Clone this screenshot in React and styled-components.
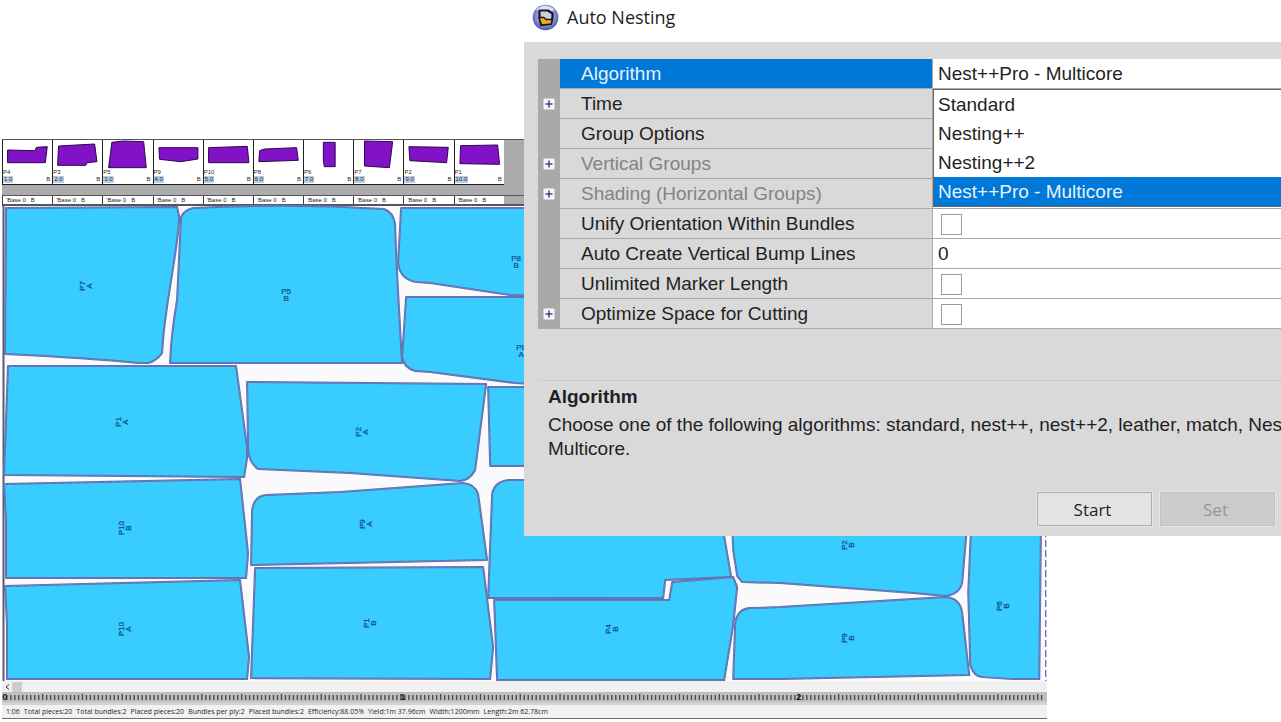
import React from 'react';
import styled, { createGlobalStyle } from 'styled-components';

const GlobalStyle = createGlobalStyle`
  * {
    box-sizing: border-box;
  }

  body {
    margin: 0;
    background: #ffffff;
    color: #1f1f24;
    font-family: 'Liberation Sans', Arial, sans-serif;
  }
`;

const Desktop = styled.main`
  position: relative;
  min-height: 100vh;
  overflow: hidden;
`;

/* marker window */

const MarkerWindow = styled.section`
  position: absolute;
  top: 139px;
  left: 2px;
  width: 81.6%;
  background: #ababab;
  border-bottom: 1px solid #6f6f6f;
`;

const Strip = styled.div`
  display: grid;
  grid-template-columns: repeat(10, 4.8%);
  border-top: 1px solid #55555c;
  margin-bottom: ${(props) => props.$gap || 0}px;
`;

const Thumb = styled.div`
  display: flex;
  flex-direction: column;
  height: 45px;
  background: #ffffff;
  border-left: 1px solid #202020;
  border-bottom: 1px solid #202020;
  font-size: 6px;
  line-height: 7px;
`;

const ThumbShape = styled.svg`
  display: block;
  width: 100%;
  height: 29px;
`;

const ThumbFoot = styled.div`
  display: flex;
  justify-content: space-between;
  padding-right: 2px;
`;

const ThumbNumber = styled.span`
  padding: 0 1px;
  background: #b9cfe4;
`;

const SizeCell = styled.div`
  height: 8px;
  padding-left: 3px;
  background: #ffffff;
  border-left: 1px solid #404040;
  font-size: 6px;
  line-height: 8px;
  white-space: pre;
`;

const MarkerCanvas = styled.svg`
  display: block;
  width: 100%;
  background: #fafafc;
  font-family: 'Liberation Sans', Arial, sans-serif;
`;

const ScrollBar = styled.div`
  display: flex;
  align-items: center;
  height: 11px;
  background: #f0f0f0;
`;

const ScrollArrow = styled.button`
  display: flex;
  align-items: center;
  justify-content: center;
  width: 10px;
  height: 11px;
  padding: 0;
  border: none;
  background: none;
`;

const ScrollThumb = styled.div`
  width: 10px;
  height: 10px;
  background: #cdcdcd;
`;

const Ruler = styled.svg`
  display: block;
  width: 100%;
  font-family: 'Liberation Sans', Arial, sans-serif;
`;

const StatusBar = styled.footer`
  display: flex;
  gap: 4px;
  height: 13px;
  padding-left: 4px;
  background: #f1f1f1;
  color: #26262c;
  font-family: 'Open Sans', sans-serif;
  font-size: 7px;
  line-height: 14px;
  white-space: nowrap;
`;

/* dialog */

const Dialog = styled.section`
  position: absolute;
  top: 0;
  left: 524px;
  right: 0;
  background: #d9d9d9;
`;

const TitleBar = styled.header`
  display: flex;
  align-items: center;
  gap: 8px;
  height: 42px;
  padding: 0 8px 8px;
  background: #ffffff;
`;

const Title = styled.h1`
  margin: 0;
  font-family: 'Open Sans', sans-serif;
  font-size: 18px;
  font-weight: 400;
  line-height: 24px;
`;

const PropertyGrid = styled.div`
  margin: 17px 0 0 14px;
  font-size: 19px;
`;

const Row = styled.div`
  display: grid;
  grid-template-columns: 22px 372px 1fr;
  height: 30px;
`;

const Gutter = styled.div`
  display: flex;
  align-items: center;
  justify-content: center;
  background: #a9a9a9;
`;

const Expand = styled.button`
  display: flex;
  align-items: center;
  justify-content: center;
  width: 12px;
  height: 12px;
  padding: 0;
  border: 1px solid #d0d0d8;
  border-radius: 2px;
  background: #f6f6fa;
`;

const Name = styled.label`
  padding-left: 21px;
  border-bottom: 1px solid #a9a9a9;
  background: ${(props) => (props.$selected ? '#0078d7' : 'transparent')};
  color: ${(props) => {
    if (props.$selected) return '#e4f2ff';
    return props.$disabled ? '#838383' : 'inherit';
  }};
  line-height: 29px;
`;

const Value = styled.div`
  position: relative;
  display: flex;
  align-items: center;
  border-left: 1px solid #a9a9a9;
  border-bottom: 1px solid #a9a9a9;
  background: #ffffff;
`;

const Select = styled.select`
  width: 100%;
  height: 28px;
  padding: 0 0 0 5px;
  border: none;
  background: none;
  color: inherit;
  font: inherit;
  appearance: none;
`;

const TextInput = styled.input`
  width: 100%;
  height: 28px;
  padding: 0 0 0 5px;
  border: none;
  background: none;
  color: inherit;
  font: inherit;
`;

const CheckBox = styled.input`
  width: 21px;
  height: 21px;
  margin: 2px 0 0 8px;
  border: 1px solid #9c9c9c;
  background: #ffffff;
  appearance: none;
`;

const Options = styled.ul`
  position: absolute;
  z-index: 1;
  top: 30px;
  left: 0;
  right: 0;
  margin: 0;
  padding: 0;
  border: 1px solid #66666a;
  border-right: none;
  background: #ffffff;
  list-style: none;
`;

const Option = styled.li`
  padding-left: 4px;
  background: ${(props) => (props.$selected ? '#0078d7' : 'transparent')};
  color: ${(props) => (props.$selected ? '#e4f2ff' : 'inherit')};
  line-height: 29px;
`;

const Description = styled.div`
  height: 96px;
  margin: 51px 0 0 14px;
  padding: 4px 0 0 10px;
  border-top: 1px solid #cccccc;
  overflow: hidden;
  font-size: 19px;
  line-height: 24px;
  white-space: nowrap;
`;

const DescriptionTitle = styled.h2`
  margin: 0 0 4px;
  font-size: 19px;
  line-height: 24px;
`;

const DescriptionText = styled.p`
  margin: 0;
`;

const Actions = styled.div`
  display: flex;
  justify-content: flex-end;
  gap: 8px;
  margin-top: 16px;
  padding: 0 6px 10px;
`;

const Button = styled.button`
  width: 115px;
  height: 34px;
  padding: 0 4px 0 0;
  border: 1px solid #adadad;
  outline: 1px solid #e6e6e6;
  background: #e3e3e3;
  color: #1f1f24;
  font-family: 'Open Sans', sans-serif;
  font-size: 17px;

  &:disabled {
    border-color: #c2c2c2;
    background: #cccccc;
    color: #969696;
  }
`;

const thumbs = [
  { name: 'P4', points: '14,30 97,32 102,22 135,20 129,68 14,68' },
  { name: 'P3', points: '17,18 127,12 134,65 104,68 100,76 14,76' },
  { name: 'P5', points: '27,7 62,3 124,5 132,83 17,83' },
  { name: 'P9', points: '15,23 134,23 134,57 82,65 17,58' },
  { name: 'P10', points: '14,23 132,19 137,68 14,68' },
  { name: 'P8', points: '15,65 17,32 32,27 130,23 135,61' },
  { name: 'P6', points: '59,7 95,7 95,80 62,80 59,60' },
  { name: 'P7', points: '32,3 118,5 108,83 32,78' },
  { name: 'P2', points: '15,20 135,22 130,68 18,62' },
  { name: 'P1', points: '17,17 130,15 136,73 15,71' },
];

const pieces = [
  'M6 208 L177 207 L179 216 C180 238 166 300 163 340 L162 353 Q156 361 148 363 L138 363 Q90 358 5 354 Z',
  'M181 217 Q184 210 193 208 Q290 203 384 209 Q393 212 395 224 Q396 262 402 363 L170 363 Q171 335 177 300 Z',
  'M401 208 H560 V296 L510 295 L430 283 L416 282 Q399 279 398 262 Z',
  'M406 297 H560 V386 L515 383 L430 372 L415 371 Q404 368 402 357 Z',
  'M8 366 H236 L247 447 V458 L244 477 L4 475 Z',
  'M247 382 L486 384 L475 470 Q470 480 460 481 L350 473 L258 469 Q249 462 248 450 Z',
  'M488 387 H600 V466 H490 Z',
  'M508 480 H720 L724 536 L731 577 L665 580 L663 598 H488 L492 494 Q494 482 508 480 Z',
  'M494 600 L669 600 L672 582 L733 577 L737 587 L733 625 L724 680 H497 Z',
  'M4 484 L240 479 L248 553 L246 578 H6 V520 Z',
  'M5 586 L240 580 L249 657 L247 679 H7 V624 Z',
  'M251 565 L252 510 Q254 496 266 495 L340 492 L463 483 Q475 484 478 494 L487 560 Z',
  'M255 568 L483 567 L493 647 L490 679 L251 678 Z',
  'M731 500 L733 550 L737 576 L742 582 L780 583 L913 593 L945 596 Q960 594 962 582 L969 500 Z',
  'M733 679 L735 622 Q738 609 749 608 L780 607 L945 597 Q960 598 962 613 L969 675 L780 679 Z',
  'M972 500 L968 592 L970 665 Q974 677 982 677 L1013 679 L1039 679 L1041 500 Z',
];

const labels = [
  { x: 86, y: 286, name: 'P7', bundle: 'A' },
  { x: 286, y: 295, name: 'P5', bundle: 'B', flat: true },
  { x: 516, y: 262, name: 'P8', bundle: 'B', flat: true },
  { x: 521, y: 351, name: 'P8', bundle: 'A', flat: true },
  { x: 122, y: 422, name: 'P1', bundle: 'A' },
  { x: 362, y: 432, name: 'P2', bundle: 'A' },
  { x: 125, y: 528, name: 'P10', bundle: 'B' },
  { x: 125, y: 629, name: 'P10', bundle: 'A' },
  { x: 366, y: 524, name: 'P9', bundle: 'A' },
  { x: 370, y: 623, name: 'P1', bundle: 'B' },
  { x: 612, y: 629, name: 'P4', bundle: 'B' },
  { x: 848, y: 545, name: 'P2', bundle: 'B' },
  { x: 848, y: 638, name: 'P9', bundle: 'B' },
  { x: 1003, y: 606, name: 'P6', bundle: 'B' },
];

const ticks = Array.from({ length: 261 }, (_, i) => i);

const status = [
  '1:06',
  'Total pieces:20',
  'Total bundles:2',
  'Placed pieces:20',
  'Bundles per ply:2',
  'Placed bundles:2',
  'Efficiency:88.05%',
  'Yield:1m 37.96cm',
  'Width:1200mm',
  'Length:2m 62.78cm',
];

const algorithms = [
  'Standard',
  'Nesting++',
  'Nesting++2',
  'Nest++Pro - Multicore',
];

const properties = [
  { id: 'algorithm', name: 'Algorithm', kind: 'select', selected: true },
  { id: 'time', name: 'Time', expand: true },
  { id: 'group', name: 'Group Options' },
  { id: 'vertical', name: 'Vertical Groups', expand: true, disabled: true },
  {
    id: 'shading',
    name: 'Shading (Horizontal Groups)',
    expand: true,
    disabled: true,
  },
  { id: 'unify', name: 'Unify Orientation Within Bundles', kind: 'check' },
  { id: 'bump', name: 'Auto Create Vertical Bump Lines', kind: 'text' },
  { id: 'unlimited', name: 'Unlimited Marker Length', kind: 'check' },
  {
    id: 'optimize',
    name: 'Optimize Space for Cutting',
    kind: 'check',
    expand: true,
  },
];

const AppIcon = () => (
  <svg width="27" height="27" viewBox="0 0 27 27" aria-hidden="true">
    <defs>
      <radialGradient id="ball" cx="50%" cy="45%" r="55%">
        <stop offset="0" stopColor="#d4d8f6" />
        <stop offset="0.65" stopColor="#8a92d6" />
        <stop offset="1" stopColor="#4a52a6" />
      </radialGradient>
    </defs>
    <circle cx="13.5" cy="13.5" r="12.8" fill="url(#ball)" />
    <path d="M4 6 Q13 -3 23 6 L19 7 H7 Z" fill="#eceefb" opacity="0.85" />
    <path
      d="M7.5 13 V6.5 H16 L20.5 9.5 V13 L19 20 L9 21 Z"
      fill="#cfcfd2"
      stroke="#17172a"
      strokeWidth="2.2"
      strokeLinejoin="round"
    />
    <path
      d="M7 13.5 H12 L14 15.5 H20.5 L19 20 L9.5 21 Z"
      fill="#f5ab1c"
      stroke="#17172a"
      strokeWidth="1.4"
      strokeLinejoin="round"
    />
  </svg>
);

const Label = ({ x, y, name, bundle, flat }) => (
  <g
    transform={`translate(${x} ${y})${flat ? '' : ' rotate(-90)'}`}
    fontSize="8"
    fill="#0d4a86"
    stroke="#0d4a86"
    strokeWidth="0.2"
    textAnchor="middle"
  >
    <text y="-1">{name}</text>
    <text y="6">{bundle}</text>
  </g>
);

const Marker = () => (
  <MarkerWindow aria-label="Marker">
    <Strip $gap={10}>
      {thumbs.map((thumb, i) => (
        <Thumb key={thumb.name}>
          <ThumbShape viewBox="0 0 150 87" preserveAspectRatio="none">
            <polygon
              points={thumb.points}
              fill="#8212c8"
              stroke="#2a0648"
              strokeWidth="3"
            />
          </ThumbShape>
          <span>{thumb.name}</span>
          <ThumbFoot>
            <ThumbNumber>{i + 1}.0</ThumbNumber>
            <span>B</span>
          </ThumbFoot>
        </Thumb>
      ))}
    </Strip>
    <Strip>
      {thumbs.map((thumb) => (
        <SizeCell key={thumb.name}>{"'Base 0   B"}</SizeCell>
      ))}
    </Strip>
    <MarkerCanvas viewBox="2 204 1045 477">
      <path d="M2 205 H1047" stroke="#55555c" strokeWidth="2" />
      <path d="M3.5 205 V681" stroke="#5c5c74" strokeWidth="2" />
      {pieces.map((d) => (
        <g key={d} strokeLinejoin="round">
          <path d={d} fill="#38ccff" stroke="#5a6cae" strokeWidth="2" />
          <path
            d={d}
            fill="none"
            stroke="#8796cc"
            strokeWidth="0.6"
            strokeDasharray="3 1"
          />
        </g>
      ))}
      {labels.map((label) => (
        <Label key={`${label.x}-${label.y}`} {...label} />
      ))}
      <path
        d="M1045.5 500 V681"
        stroke="#3c3c9c"
        strokeWidth="1"
        strokeDasharray="7 3"
      />
    </MarkerCanvas>
    <ScrollBar>
      <ScrollArrow aria-label="Scroll left">
        <svg width="5" height="6" viewBox="0 0 5 6">
          <path d="M4 0.5 L1 3 L4 5.5" fill="none" stroke="#333333" />
        </svg>
      </ScrollArrow>
      <ScrollThumb />
    </ScrollBar>
    <Ruler viewBox="2 692 1045 13">
      <rect x="2" y="692" width="1045" height="13" fill="#d3d3d3" />
      <rect x="2" y="692" width="1045" height="10" fill="#bfbfbf" />
      {ticks.map((i) => (
        <rect
          key={i}
          x={6 + i * 3.98}
          y={i % 10 === 9 ? 694 : 695}
          width="1.4"
          height={i % 10 === 9 ? 6 : 5}
          fill="#4c4c4c"
        />
      ))}
      <g fontSize="9" fontWeight="700" fill="#161616">
        <text x="2" y="700">
          0
        </text>
        <text x="400" y="700">
          1
        </text>
        <text x="796" y="700">
          2
        </text>
      </g>
    </Ruler>
    <StatusBar>
      {status.map((item) => (
        <span key={item}>{item}</span>
      ))}
    </StatusBar>
  </MarkerWindow>
);

const Editor = ({ id, kind }) => {
  if (kind === 'select') {
    return (
      <>
        <Select id={id} defaultValue="Nest++Pro - Multicore">
          {algorithms.map((name) => (
            <option key={name}>{name}</option>
          ))}
        </Select>
        <Options role="listbox" aria-label="Algorithm">
          {algorithms.map((name, i) => (
            <Option
              key={name}
              role="option"
              aria-selected={i === 3}
              $selected={i === 3}
            >
              {name}
            </Option>
          ))}
        </Options>
      </>
    );
  }
  if (kind === 'text') return <TextInput id={id} type="text" defaultValue="0" />;
  if (kind === 'check') return <CheckBox id={id} type="checkbox" />;
  return null;
};

const AutoNesting = () => (
  <Dialog role="dialog" aria-labelledby="dialog-title">
    <TitleBar>
      <AppIcon />
      <Title id="dialog-title">Auto Nesting</Title>
    </TitleBar>
    <PropertyGrid>
      {properties.map(({ id, name, kind, expand, selected, disabled }) => (
        <Row key={id}>
          <Gutter>
            {expand && (
              <Expand aria-label={`Expand ${name}`}>
                <svg width="8" height="8" viewBox="0 0 8 8">
                  <path
                    d="M4 0.5 V7.5 M0.5 4 H7.5"
                    stroke="#3b4a86"
                    strokeWidth="1.5"
                  />
                </svg>
              </Expand>
            )}
          </Gutter>
          <Name
            as={kind ? 'label' : 'div'}
            htmlFor={kind ? id : undefined}
            $selected={selected}
            $disabled={disabled}
          >
            {name}
          </Name>
          <Value>
            <Editor id={id} kind={kind} />
          </Value>
        </Row>
      ))}
    </PropertyGrid>
    <Description>
      <DescriptionTitle>Algorithm</DescriptionTitle>
      <DescriptionText>
        Choose one of the following algorithms: standard, nest++, nest++2,
        leather, match, Nest++Pro -
        <br />
        Multicore.
      </DescriptionText>
    </Description>
    <Actions>
      <Button type="button">Start</Button>
      <Button type="button" disabled>
        Set
      </Button>
    </Actions>
  </Dialog>
);

const App = () => (
  <>
    <GlobalStyle />
    <Desktop>
      <Marker />
      <AutoNesting />
    </Desktop>
  </>
);

export default App;
